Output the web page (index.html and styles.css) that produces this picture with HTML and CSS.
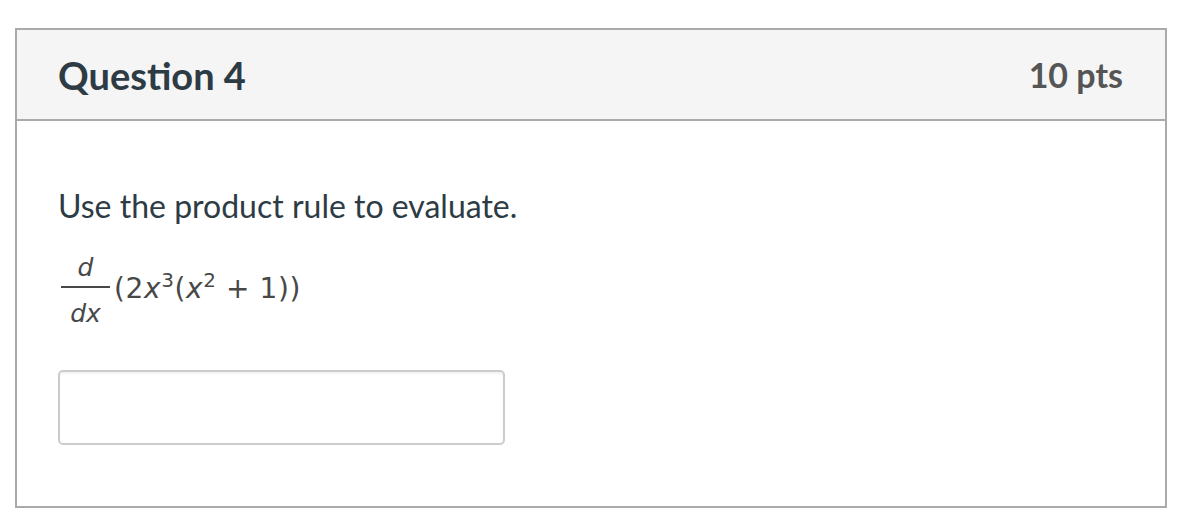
FILE: index.html
```html
<!DOCTYPE html>
<html>
<head>
<meta charset="utf-8">
<link rel="stylesheet" href="styles.css">
</head>
<body>
<div class="card">
  <div class="card-header">
    <h2 class="title">Question 4</h2>
    <span class="pts">10 pts</span>
  </div>
  <div class="card-body">
    <p class="prompt">Use the product rule to evaluate.</p>
    <div class="math">
      <span class="frac">
        <span class="num"><i>d</i></span>
        <span class="den"><i>dx</i></span>
      </span>
      <span class="expr">(2<i>x</i><sup>3</sup>(<i>x</i><sup>2</sup> + 1))</span>
    </div>
    <input class="answer" type="text">
  </div>
</div>
</body>
</html>
```
FILE: styles.css
```css
html, body {
  margin: 0;
  padding: 0;
  background: #fff;
}
body {
  padding: 28px 12px 0 15px;
  font-family: Lato, "Liberation Sans", sans-serif;
}
.card {
  width: 1148px;
  height: 476px;
  border: 2px solid #aaaaaa;
  display: flex;
  flex-direction: column;
}
.card-header {
  height: 89px;
  flex: none;
  background: #f5f5f5;
  border-bottom: 2px solid #aaaaaa;
  display: flex;
  align-items: center;
  justify-content: space-between;
  padding: 0 42px 0 41px;
}
.title {
  margin: 0;
  font-size: 38px;
  font-weight: 700;
  color: #2d3b45;
  line-height: 1;
}
.pts {
  font-size: 34px;
  font-weight: 700;
  color: #555555;
  line-height: 1;
}
.card-body {
  padding: 0 41px;
}
.prompt {
  margin: 66px 0 0 0;
  font-size: 32px;
  line-height: 38px;
  color: #2d3b45;
}
.math {
  display: flex;
  align-items: flex-start;
  margin-top: 31px;
  color: #484848;
  font-family: "DejaVu Sans", sans-serif;
}
.math i {
  font-style: italic;
}
.frac {
  display: flex;
  flex-direction: column;
  align-items: center;
  width: 49px;
  margin-left: 3px;
  font-size: 25px;
}
.num {
  display: block;
  width: 100%;
  text-align: center;
  line-height: 24px;
  padding-bottom: 6px;
  border-bottom: 2px solid #484848;
}
.den {
  display: block;
  line-height: 24px;
  padding-top: 14px;
}
.expr {
  margin-left: 4px;
  margin-top: 18px;
  font-size: 28px;
  line-height: 30px;
  letter-spacing: 0.6px;
  white-space: nowrap;
}
.expr sup {
  font-size: 20px;
  vertical-align: 11px;
  line-height: 0;
}
.answer {
  display: block;
  margin-top: 44px;
  width: 447px;
  height: 75px;
  box-sizing: border-box;
  border: 2px solid #cccccc;
  border-radius: 5px;
  box-shadow: inset 0 2px 2px rgba(0,0,0,0.05);
  background: #fff;
  outline: none;
}
```
